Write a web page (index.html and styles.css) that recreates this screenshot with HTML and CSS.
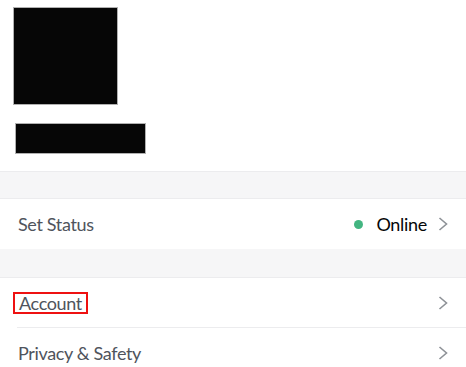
FILE: index.html
```html
<!DOCTYPE html>
<html>
<head>
<meta charset="utf-8">
<link rel="stylesheet" href="styles.css">
</head>
<body>
<div class="profile">
  <div class="avatar"></div>
  <div class="name"></div>
</div>
<div class="band"></div>
<div class="row">
  <span class="label">Set Status</span>
  <span class="right"><span class="dot"></span><span class="value">Online</span>
    <svg class="chev" width="10" height="14" viewBox="0 0 10 14"><polyline points="1.5,1 8.5,7 1.5,13" fill="none" stroke="#8e9297" stroke-width="1.6"/></svg>
  </span>
</div>
<div class="band band2"></div>
<div class="row divided">
  <span class="label"><span class="hl">Account</span></span>
  <span class="right">
    <svg class="chev" width="10" height="14" viewBox="0 0 10 14"><polyline points="1.5,1 8.5,7 1.5,13" fill="none" stroke="#8e9297" stroke-width="1.6"/></svg>
  </span>
</div>
<div class="row">
  <span class="label">Privacy &amp; Safety</span>
  <span class="right">
    <svg class="chev" width="10" height="14" viewBox="0 0 10 14"><polyline points="1.5,1 8.5,7 1.5,13" fill="none" stroke="#8e9297" stroke-width="1.6"/></svg>
  </span>
</div>
</body>
</html>
```
FILE: styles.css
```css
html, body {
  margin: 0;
  padding: 0;
  background: #ffffff;
  font-family: Lato, "Noto Sans", sans-serif;
  overflow: hidden;
}
.profile {
  height: 171px;
  box-sizing: border-box;
  padding-top: 7px;
}
.avatar {
  width: 103px;
  height: 96px;
  margin-left: 13px;
  background: #060606;
  border: 1px solid #b0b0b0;
}
.name {
  width: 129px;
  height: 29px;
  margin-left: 15px;
  margin-top: 18px;
  background: #060606;
  border: 1px solid #b0b0b0;
}
.band {
  height: 26px;
  background: #f6f6f7;
  border-top: 1px solid #ececee;
  border-bottom: 1px solid #ececee;
}
.band2 {
  border-top: none;
  height: 28px;
}
.row {
  height: 50px;
  display: flex;
  align-items: center;
  justify-content: space-between;
  padding: 0 18px 0 18px;
  position: relative;
}
.divided::after {
  content: "";
  position: absolute;
  left: 17px;
  right: 0;
  bottom: 0;
  height: 1px;
  background: #ececee;
}
.label {
  font-size: 18px;
  letter-spacing: -0.35px;
  color: #4f545c;
}
.hl {
  display: inline-block;
  border: 2px solid #ee1111;
  padding: 0 4px 0 4px;
  margin-left: -5px;
  line-height: 18px;
}
.right {
  display: flex;
  align-items: center;
}
.dot {
  width: 9px;
  height: 9px;
  border-radius: 50%;
  background: #43b581;
  margin-right: 13px;
}
.value {
  font-size: 18px;
  letter-spacing: -0.3px;
  color: #060607;
  margin-right: 11px;
}
.chev {
  display: block;
}
```
